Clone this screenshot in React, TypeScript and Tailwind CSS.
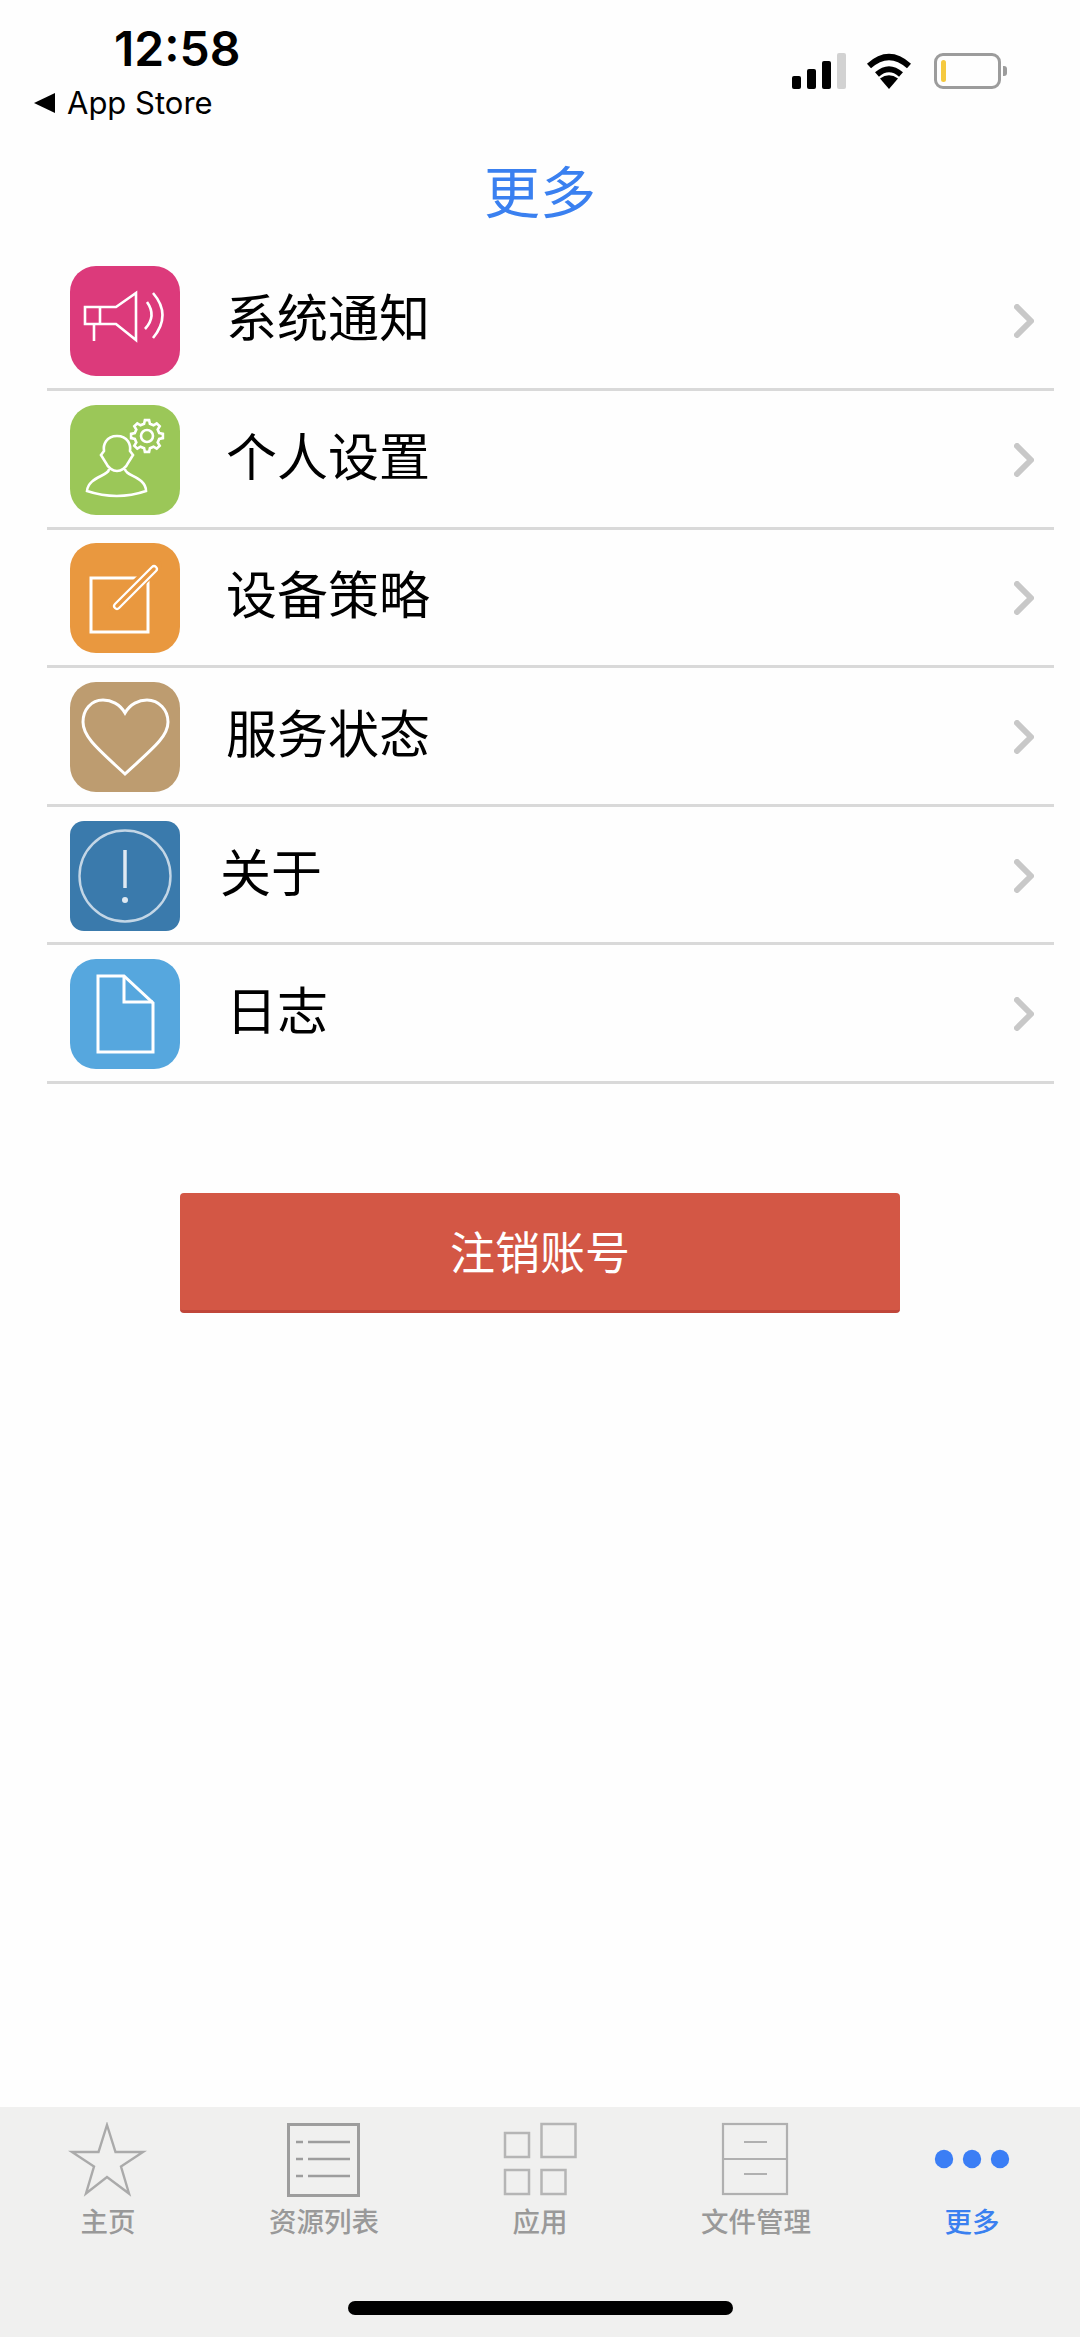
import React from "react";

const gearPath = (() => {
  const cx = 77, cy = 31, teeth = 8, rO = 16, rI = 12.5;
  const pts: string[] = [];
  for (let i = 0; i < teeth; i++) {
    const a = (i / teeth) * Math.PI * 2;
    const step = (Math.PI * 2) / teeth;
    [[-0.3, rI], [-0.17, rO], [0.17, rO], [0.3, rI]].forEach(([f, r]) => {
      const t = a + f * step;
      pts.push(`${(cx + r * Math.cos(t)).toFixed(1)} ${(cy + r * Math.sin(t)).toFixed(1)}`);
    });
  }
  return "M" + pts.join(" L") + "Z";
})();

function IconSvg({ children }: { children: React.ReactNode }) {
  return (
    <svg viewBox="0 0 110 110" className="w-[110px] h-[110px] block" fill="none" stroke="#fff" strokeWidth="2.6">
      {children}
    </svg>
  );
}

const rows = [
  {
    label: "系统通知",
    bg: "bg-[#dc3a7b]",
    radius: "rounded-[26px]",
    ml: "ml-[46px]",
    icon: (
      <IconSvg>
        <path d="M15 41H46L66 27V74L46 58H15Z" />
        <path d="M30 41V58M24 58V75" />
        <path d="M77 36Q87 50 75 63" />
        <path d="M83 27Q102 49 83 72" />
      </IconSvg>
    ),
  },
  {
    label: "个人设置",
    bg: "bg-[#9bc758]",
    radius: "rounded-[26px]",
    ml: "ml-[46px]",
    icon: (
      <IconSvg>
        <path d="M47 31C36 31 33 40 34 46L31 50L36 58C38 63 43 66 47 66C51 66 56 63 58 58L63 50L60 46C61 40 58 31 47 31Z" />
        <path d="M39 64C39 71 18 72 17 86Q47 96 76 86C76 72 55 71 55 64" />
        <path d={gearPath} />
        <circle cx="77" cy="31" r="6" />
      </IconSvg>
    ),
  },
  {
    label: "设备策略",
    bg: "bg-[#e9983f]",
    radius: "rounded-[26px]",
    ml: "ml-[46px]",
    icon: (
      <IconSvg>
        <rect x="21" y="35" width="57" height="54" strokeWidth="3" />
        <path d="M45 63L86 23" stroke="#e9983f" strokeWidth="12" strokeLinecap="round" />
        <path d="M47 63L84 26" strokeWidth="8" strokeLinecap="round" />
        <path d="M47 63L84 26" stroke="#e9983f" strokeWidth="3.5" strokeLinecap="round" />
      </IconSvg>
    ),
  },
  {
    label: "服务状态",
    bg: "bg-[#bd9c70]",
    radius: "rounded-[26px]",
    ml: "ml-[46px]",
    icon: (
      <IconSvg>
        <path d="M55 31C50 22 41 18 33 18C21 18 13 28 13 40C13 55 28 67 55 92C82 67 98 55 98 40C98 28 89 18 77 18C69 18 60 22 55 31Z" strokeWidth="3" />
      </IconSvg>
    ),
  },
  {
    label: "关于",
    bg: "bg-[#3a7aac]",
    radius: "rounded-[14px]",
    ml: "ml-[40px]",
    icon: (
      <IconSvg>
        <circle cx="55" cy="55" r="45.5" stroke="#c3d6e6" strokeWidth="2.4" />
        <path d="M55 29V67" stroke="#dfe9f2" strokeWidth="3.5" />
        <circle cx="55" cy="79" r="3" fill="#dfe9f2" stroke="none" />
      </IconSvg>
    ),
  },
  {
    label: "日志",
    bg: "bg-[#56a7de]",
    radius: "rounded-[26px]",
    ml: "ml-[46px]",
    icon: (
      <IconSvg>
        <path d="M28 17H54L83 44V93H28Z" strokeWidth="3" />
        <path d="M54 17V43H83" strokeWidth="3" />
      </IconSvg>
    ),
  },
];

const tabs = [
  {
    label: "主页",
    icon: (
      <path d="M39 3L47.5 30H75L53 44.5L61 71.5L39 55L18 71.5L26 44.5L4 30H30.5Z" fill="none" stroke="#aaaaaa" strokeWidth="2.4" />
    ),
  },
  {
    label: "资源列表",
    icon: (
      <g fill="none" stroke="#9d9d9d">
        <rect x="4.5" y="2.5" width="70" height="71" strokeWidth="3" />
        <path d="M12 20H19M24 20H66M12 37H19M24 37H66M12 54H19M24 54H66" strokeWidth="2.5" />
      </g>
    ),
  },
  {
    label: "应用",
    icon: (
      <g fill="none" stroke="#b5b5b5" strokeWidth="2.5">
        <rect x="5" y="11" width="24" height="24" />
        <rect x="41.5" y="2" width="34" height="33" />
        <rect x="5" y="48" width="24" height="24" />
        <rect x="41.5" y="48" width="24" height="24" />
      </g>
    ),
  },
  {
    label: "文件管理",
    icon: (
      <g fill="none" stroke="#b0b0b0" strokeWidth="2.2">
        <rect x="7" y="2" width="64" height="70" />
        <path d="M7 37H71M28 20H51M28 52H51" />
      </g>
    ),
  },
  {
    label: "更多",
    active: true,
    icon: (
      <g fill="#3b7ef5">
        <circle cx="12" cy="37" r="9.2" />
        <circle cx="40" cy="37" r="9.2" />
        <circle cx="68" cy="37" r="9.2" />
      </g>
    ),
  },
];

function Chevron() {
  return (
    <svg viewBox="0 0 20 34" className="w-[20px] h-[34px] block" fill="none" stroke="#c8c8c8" strokeWidth="6" strokeLinecap="round" strokeLinejoin="round">
      <path d="M3 3L17 17L3 31" />
    </svg>
  );
}

export default function App() {
  return (
    <div className="w-[1080px] h-[2337px] flex flex-col bg-[#fefefe] font-['Noto_Sans_CJK_SC',sans-serif] overflow-hidden">
      <header className="h-[252.4px] shrink-0 flex flex-col">
        <div className="flex justify-between h-[124px]">
          <div className="pl-[34px]">
            <div className="mt-[24px] ml-[80px] h-[50px] leading-[50px] text-[48px] font-semibold text-black font-['Inter',sans-serif]">12:58</div>
            <div className="mt-[9px] h-[40px] flex items-center gap-[12px]">
              <svg viewBox="0 0 21 20" className="w-[21px] h-[20px] block">
                <path d="M21 0V20L0 10Z" fill="#000" />
              </svg>
              <span className="text-[31px] leading-[40px] text-black font-['Inter',sans-serif]">App Store</span>
            </div>
          </div>
          <div className="flex items-start gap-[20px] pt-[53px] pr-[73px]">
            <div className="flex items-end gap-[6px] h-[36px]">
              <div className="w-[9px] h-[13px] bg-black rounded-[2px]" />
              <div className="w-[9px] h-[20px] bg-black rounded-[2px]" />
              <div className="w-[9px] h-[28px] bg-black rounded-[2px]" />
              <div className="w-[9px] h-[36px] bg-[#d2d2d2] rounded-[2px]" />
            </div>
            <svg viewBox="0 0 46 36" className="w-[46px] h-[36px] block" fill="none" stroke="#000" strokeWidth="6">
              <path d="M3 13Q23 -5 43 13" />
              <path d="M11 21.5Q23 11 35 21.5" />
              <path d="M23 36L14 25.5Q23 19 32 25.5Z" fill="#000" stroke="none" />
            </svg>
            <div className="flex items-center gap-[2px] ml-[2px]">
              <div className="w-[67px] h-[36px] rounded-[9px] border-[3px] border-[#9c9c9c] p-[4px]">
                <div className="w-[5px] h-full rounded-[3px] bg-[#f5c93f]" />
              </div>
              <div className="w-[4px] h-[10px] bg-[#9c9c9c] rounded-r-[3px]" />
            </div>
          </div>
        </div>
        <h1 className="mt-[30px] h-[70px] leading-[70px] text-center text-[56px] font-normal text-[#3a80f0]">更多</h1>
      </header>

      <ul className="ml-[47px] w-[1007px] shrink-0">
        {rows.map((r) => (
          <li key={r.label} className="h-[138.6px] pt-[2px] flex items-center border-b-[3px] border-[#d9d9d9]">
            <div className={`ml-[23px] w-[110px] h-[110px] shrink-0 ${r.bg} ${r.radius}`}>{r.icon}</div>
            <span className={`${r.ml} -mt-[12px] text-[51px] leading-[60px] text-black`}>{r.label}</span>
            <div className="ml-auto mr-[20px]">
              <Chevron />
            </div>
          </li>
        ))}
      </ul>

      <button className="mt-[109px] mx-auto shrink-0 w-[720px] h-[120px] rounded-[4px] bg-[#d35745] border-b-[3px] border-[#c0463a] text-white text-[45px] leading-[60px]">
        注销账号
      </button>

      <nav className="mt-auto h-[230px] shrink-0 bg-[#f0f0ef] flex flex-col">
        <div className="grid grid-cols-5 pt-[15px]">
          {tabs.map((t) => (
            <div key={t.label} className="flex flex-col items-center">
              <svg viewBox="0 0 80 76" className="w-[80px] h-[76px] block">
                {t.icon}
              </svg>
              <span className={`mt-[4px] h-[36px] leading-[36px] text-[27.5px] font-medium ${t.active ? "text-[#3a80f0]" : "text-[#999999]"}`}>{t.label}</span>
            </div>
          ))}
        </div>
        <div className="mt-[63px] mx-auto w-[385px] h-[14px] rounded-full bg-black" />
      </nav>
    </div>
  );
}
